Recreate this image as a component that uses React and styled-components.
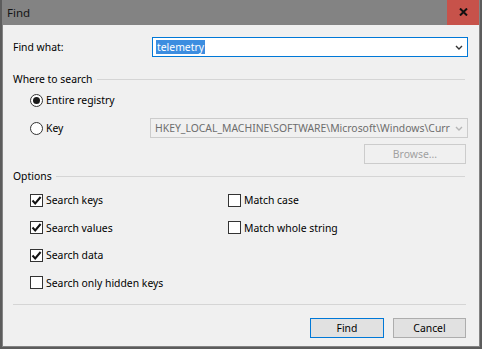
import React from "react";
import styled, { createGlobalStyle } from "styled-components";

const Global = createGlobalStyle`
  html, body { margin: 0; padding: 0; background: #ffffff; }
  body { font-family: "Noto Sans", "Open Sans", sans-serif; font-size: 10.4px; color: #000; }
  * { box-sizing: border-box; }
`;

const Window = styled.div`
  width: 482px;
  height: 349px;
  background: #838383;
  border: 2px solid #5c5c5c;
  border-top: 0;
  display: flex;
  flex-direction: column;
  box-shadow: 0 2px 0 #cfcfcf;
`;

const TitleBar = styled.div`
  height: 25px;
  display: flex;
  align-items: center;
  padding-left: 5px;
  padding-right: 1px;
  flex-shrink: 0;
`;

const Title = styled.div`
  flex: 1;
  font-size: 11.5px;
  color: #141414;
  padding-bottom: 1px;
`;

const Close = styled.div`
  width: 32px;
  height: 25px;
  background: #c7524a;
  display: flex;
  align-items: center;
  justify-content: center;
  padding-bottom: 1px;
`;

const Client = styled.div`
  flex: 1;
  margin: 0 1px 1px 1px;
  background: #f0f0f0;
  padding: 12px 11px 0 10px;
  display: flex;
  flex-direction: column;
`;

const FieldRow = styled.div`
  display: flex;
  align-items: center;
  height: 20px;
`;

const Label = styled.div`
  width: 139px;
  color: #000;
`;

const Combo = styled.div`
  flex: 1;
  height: ${(p) => p.$h || 20}px;
  border: 1px solid ${(p) => (p.$focused ? "#0078d7" : "#cccccc")};
  background: ${(p) => (p.$disabled ? "#f0f0f0" : "#ffffff")};
  display: flex;
  align-items: center;
  padding-left: ${(p) => (p.$focused ? 3 : 4)}px;
  padding-right: 4px;
  overflow: hidden;
`;

const ComboText = styled.div`
  flex: 1;
  overflow: hidden;
  white-space: nowrap;
  color: ${(p) => (p.$disabled ? "#6d6d6d" : "#000")};
`;

const Selected = styled.span`
  background: #3c8de0;
  color: #fff;
  padding: 2px 1px 2px 1px;
`;

const Chevron = ({ color }) => (
  <svg width="8" height="5" viewBox="0 0 8 5" style={{ flexShrink: 0, marginLeft: 4 }}>
    <path d="M1 1 L4 4 L7 1" fill="none" stroke={color} strokeWidth="1.4" />
  </svg>
);

const GroupHeader = styled.div`
  display: flex;
  align-items: center;
  height: 14px;
  margin-top: ${(p) => p.$mt}px;
  padding-right: 3px;
`;

const GroupLine = styled.div`
  flex: 1;
  height: 1px;
  background: #d5d5d5;
  margin-left: 4px;
`;

const RadioRow = styled.div`
  display: flex;
  align-items: center;
  height: 20px;
  margin-top: ${(p) => p.$mt}px;
  padding-left: 17px;
`;

const Choice = styled.label`
  display: flex;
  align-items: center;
  width: ${(p) => (p.$w ? p.$w + "px" : "auto")};
  white-space: nowrap;
`;

const RadioCircle = styled.span`
  width: 13px;
  height: 13px;
  border-radius: 50%;
  border: 1px solid #333;
  background: #fff;
  display: flex;
  align-items: center;
  justify-content: center;
  margin-right: 3px;
  flex-shrink: 0;
  &::after {
    content: "";
    width: 7px;
    height: 7px;
    border-radius: 50%;
    background: ${(p) => (p.$on ? "#1a1a1a" : "transparent")};
  }
`;

const Box = styled.span`
  width: 13px;
  height: 13px;
  border: 1px solid #333;
  background: #fff;
  display: flex;
  align-items: center;
  justify-content: center;
  margin-right: 3px;
  flex-shrink: 0;
`;

const Check = () => (
  <svg width="11" height="11" viewBox="0 0 11 11">
    <path d="M1.5 5.5 L4.2 8.4 L9.6 2" fill="none" stroke="#111" strokeWidth="2" />
  </svg>
);

const BrowseRow = styled.div`
  display: flex;
  justify-content: flex-end;
  margin-top: 6px;
  padding-right: 2px;
`;

const Button = styled.div`
  width: ${(p) => p.$w}px;
  height: 20px;
  display: flex;
  align-items: center;
  justify-content: center;
  background: ${(p) => (p.$disabled ? "#f0f0f0" : "#e1e1e1")};
  border: 1px solid
    ${(p) => (p.$default ? "#0078d7" : p.$disabled ? "#cccccc" : "#adadad")};
  color: ${(p) => (p.$disabled ? "#a0a0a0" : "#000")};
`;

const OptionsGrid = styled.div`
  display: grid;
  grid-template-columns: 198px auto;
  grid-auto-rows: 20px;
  row-gap: 7.67px;
  margin-top: 7px;
  padding-left: 17px;
`;

const Separator = styled.div`
  height: 1px;
  background: #d5d5d5;
  margin: 11px 2px 0 0;
`;

const ButtonRow = styled.div`
  display: flex;
  justify-content: flex-end;
  gap: 9px;
  margin-top: 13px;
  padding-right: 2px;
`;

const CheckItem = ({ on, label }) => (
  <Choice>
    <Box>{on && <Check />}</Box>
    {label}
  </Choice>
);

const Spacer = styled.div``;

export default function App() {
  return (
    <>
      <Global />
      <Window>
        <TitleBar>
          <Title>Find</Title>
          <Close>
            <svg width="9" height="8" viewBox="0 0 9 8">
              <path d="M1 0.5 L8 7.5 M8 0.5 L1 7.5" stroke="#111" strokeWidth="2" />
            </svg>
          </Close>
        </TitleBar>
        <Client>
          <FieldRow>
            <Label>Find what:</Label>
            <Combo $focused>
              <ComboText>
                <Selected>telemetry</Selected>
              </ComboText>
              <Chevron color="#333" />
            </Combo>
          </FieldRow>

          <GroupHeader $mt={15}>
            Where to search
            <GroupLine />
          </GroupHeader>
          <RadioRow $mt={4}>
            <Choice>
              <RadioCircle $on />
              Entire registry
            </Choice>
          </RadioRow>
          <RadioRow $mt={8}>
            <Choice $w={120}>
              <RadioCircle />
              Key
            </Choice>
            <Combo $disabled $h={20}>
              <ComboText $disabled>HKEY_LOCAL_MACHINE\SOFTWARE\Microsoft\Windows\Curr</ComboText>
              <Chevron color="#b5b5b5" />
            </Combo>
          </RadioRow>
          <BrowseRow>
            <Button $w={102} $disabled>Browse...</Button>
          </BrowseRow>

          <GroupHeader $mt={5}>
            Options
            <GroupLine />
          </GroupHeader>
          <OptionsGrid>
            <CheckItem on label="Search keys" />
            <CheckItem label="Match case" />
            <CheckItem on label="Search values" />
            <CheckItem label="Match whole string" />
            <CheckItem on label="Search data" />
            <Spacer />
            <CheckItem label="Search only hidden keys" />
          </OptionsGrid>

          <Separator />
          <ButtonRow>
            <Button $w={74} $default>Find</Button>
            <Button $w={73}>Cancel</Button>
          </ButtonRow>
        </Client>
      </Window>
    </>
  );
}
